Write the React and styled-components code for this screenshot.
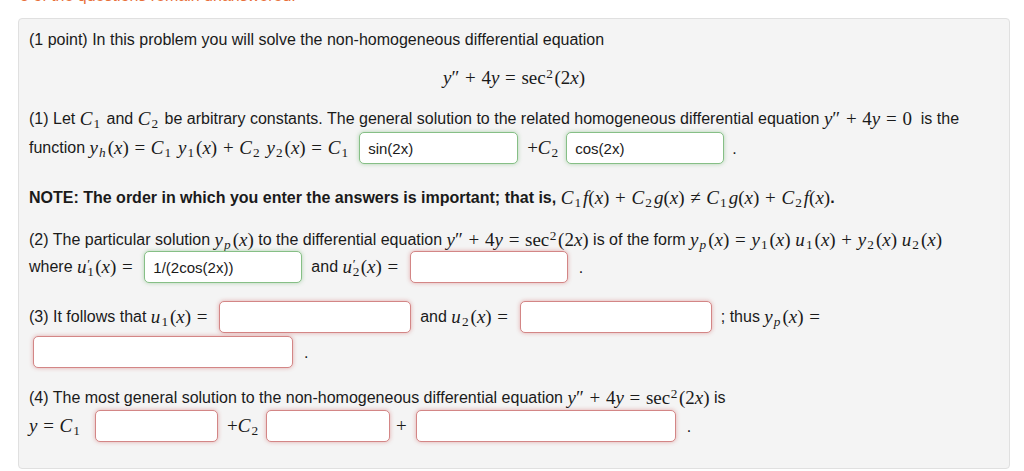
import React from "react";
import styled, { createGlobalStyle } from "styled-components";

const GlobalStyle = createGlobalStyle`
  html, body {
    margin: 0;
    padding: 0;
    background: #ffffff;
    overflow: hidden;
  }
  body {
    font-family: "Liberation Sans", Arial, sans-serif;
    font-size: 16px;
    color: #1a1a1a;
  }
`;

function App() {
  return (
    <Page>
      <GlobalStyle />
      <Notice>5 of the questions remain unanswered.</Notice>
      <Panel>
        <TextRow>
          (1 point) In this problem you will solve the non-homogeneous
          differential equation
        </TextRow>
        <DisplayRow $top={18}>
          <Math>
            <V>y</V>″<Op>+</Op>4<V>y</V>
            <Op>=</Op>sec<Sup>2</Sup>(2<V>x</V>)
          </Math>
        </DisplayRow>

        <TextRow $top={21}>
          (1) Let&nbsp;
          <Math>
            <V>C</V>
            <Sub>1</Sub>
          </Math>
          &nbsp;and&nbsp;
          <Math>
            <V>C</V>
            <Sub>2</Sub>
          </Math>
          &nbsp;be arbitrary constants. The general solution to the related
          homogeneous differential equation&nbsp;
          <Math>
            <V>y</V>″<Op>+</Op>4<V>y</V>
            <Op>=</Op>0
          </Math>
          &nbsp; is the
        </TextRow>
        <InputRow $top={3}>
          function&nbsp;
          <Math>
            <V>y</V>
            <Sub>
              <V>h</V>
            </Sub>
            (<V>x</V>)<Op>=</Op>
            <V>C</V>
            <Sub>1</Sub>&nbsp;<V>y</V>
            <Sub>1</Sub>(<V>x</V>)<Op>+</Op>
            <V>C</V>
            <Sub>2</Sub>&nbsp;<V>y</V>
            <Sub>2</Sub>(<V>x</V>)<Op>=</Op>
            <V>C</V>
            <Sub>1</Sub>
          </Math>
          <Answer $w={159} $state="ok" defaultValue="sin(2x)" readOnly />
          <Math>
            +<V>C</V>
            <Sub>2</Sub>
          </Math>
          <Answer $w={158} $state="ok" $tight defaultValue="cos(2x)" readOnly />
          <Dot>.</Dot>
        </InputRow>

        <NoteRow $top={24}>
          NOTE: The order in which you enter the answers is important; that
          is,&nbsp;
          <Math>
            <V>C</V>
            <Sub>1</Sub>
            <V>f</V>(<V>x</V>)<Op>+</Op>
            <V>C</V>
            <Sub>2</Sub>
            <V>g</V>(<V>x</V>)<Op>≠</Op>
            <V>C</V>
            <Sub>1</Sub>
            <V>g</V>(<V>x</V>)<Op>+</Op>
            <V>C</V>
            <Sub>2</Sub>
            <V>f</V>(<V>x</V>)
          </Math>
          .
        </NoteRow>

        <TextRow $top={22}>
          (2) The particular solution&nbsp;
          <Math>
            <V>y</V>
            <Sub>
              <V>p</V>
            </Sub>
            (<V>x</V>)
          </Math>
          &nbsp;to the differential equation&nbsp;
          <Math>
            <V>y</V>″<Op>+</Op>4<V>y</V>
            <Op>=</Op>sec<Sup>2</Sup>(2<V>x</V>)
          </Math>
          &nbsp;is of the form&nbsp;
          <Math>
            <V>y</V>
            <Sub>
              <V>p</V>
            </Sub>
            (<V>x</V>)<Op>=</Op>
            <V>y</V>
            <Sub>1</Sub>(<V>x</V>)&nbsp;<V>u</V>
            <Sub>1</Sub>(<V>x</V>)<Op>+</Op>
            <V>y</V>
            <Sub>2</Sub>(<V>x</V>)&nbsp;<V>u</V>
            <Sub>2</Sub>(<V>x</V>)
          </Math>
        </TextRow>
        <InputRow $top={1}>
          where&nbsp;
          <Math>
            <V>u</V>
            <Scripts>
              <ScriptLine>′</ScriptLine>
              <ScriptLine>1</ScriptLine>
            </Scripts>
            (<V>x</V>)<Op>=</Op>
          </Math>
          <Answer $w={158} $state="ok" $near defaultValue="1/(2cos(2x))" readOnly />
          and&nbsp;
          <Math>
            <V>u</V>
            <Scripts>
              <ScriptLine>′</ScriptLine>
              <ScriptLine>2</ScriptLine>
            </Scripts>
            (<V>x</V>)<Op>=</Op>
          </Math>
          <Answer $w={158} $state="bad" $near readOnly />
          <Dot>.</Dot>
        </InputRow>

        <InputRow $top={18}>
          (3) It follows that&nbsp;
          <Math>
            <V>u</V>
            <Sub>1</Sub>(<V>x</V>)<Op>=</Op>
          </Math>
          <Answer $w={192} $state="bad" $near readOnly />
          and&nbsp;
          <Math>
            <V>u</V>
            <Sub>2</Sub>(<V>x</V>)<Op>=</Op>
          </Math>
          <Answer $w={192} $state="bad" $near readOnly />
          ; thus&nbsp;
          <Math>
            <V>y</V>
            <Sub>
              <V>p</V>
            </Sub>
            (<V>x</V>)<Op>=</Op>
          </Math>
        </InputRow>
        <InputRow $top={3}>
          <Answer $w={260} $state="bad" $first readOnly />
          <Dot>.</Dot>
        </InputRow>

        <TextRow $top={20}>
          (4) The most general solution to the non-homogeneous differential
          equation&nbsp;
          <Math>
            <V>y</V>″<Op>+</Op>4<V>y</V>
            <Op>=</Op>sec<Sup>2</Sup>(2<V>x</V>)
          </Math>
          &nbsp;is
        </TextRow>
        <InputRow $top={2}>
          <Math>
            <V>y</V>
            <Op>=</Op>
            <V>C</V>
            <Sub>1</Sub>
          </Math>
          <Answer $w={123} $state="bad" $wide readOnly />
          <Math>
            +<V>C</V>
            <Sub>2</Sub>
          </Math>
          <Answer $w={124} $state="bad" $tight readOnly />
          <Math>+</Math>
          <Answer $w={260} $state="bad" readOnly />
          <Dot>.</Dot>
        </InputRow>
      </Panel>
    </Page>
  );
}

export default App;

// Styles

const Page = styled.div`
  width: 1024px;
  height: 471px;
  box-sizing: border-box;
  padding: 0 14px 0 18px;
  overflow: hidden;
`;

const Notice = styled.div`
  margin-top: -12px;
  height: 16px;
  line-height: 16px;
  font-size: 16px;
  color: #e8703a;
  padding-left: 2px;
`;

const Panel = styled.div`
  margin-top: 14px;
  box-sizing: border-box;
  width: 992px;
  height: 451px;
  background: #f4f4f4;
  border: 1px solid #e0e0e0;
  border-radius: 4px;
  padding: 11px 10px 0 10px;
`;

const TextRow = styled.div`
  margin-top: ${p => p.$top || 0}px;
  height: 20px;
  line-height: 20px;
  white-space: nowrap;
  display: flex;
  align-items: center;
`;

const NoteRow = styled(TextRow)`
  font-weight: 700;

  & > span {
    font-weight: 400;
  }
`;

const DisplayRow = styled(TextRow)`
  justify-content: center;
`;

const InputRow = styled.div`
  margin-top: ${p => p.$top || 0}px;
  height: 32px;
  white-space: nowrap;
  display: flex;
  align-items: center;
`;

const Math = styled.span`
  font-family: "Liberation Serif", "Times New Roman", serif;
  font-size: 19px;
  line-height: 20px;
  white-space: nowrap;
`;

const V = styled.i`
  font-style: italic;
`;

const Op = styled.span`
  margin: 0 0.3em;
`;

const Sub = styled.sub`
  font-size: 70%;
  line-height: 0;
  vertical-align: -0.2em;
  margin-left: 0.08em;
  margin-right: 0.15em;
`;

const Sup = styled.sup`
  font-size: 70%;
  line-height: 0;
  vertical-align: 0.45em;
  margin-left: 0.04em;
  margin-right: 0.12em;
`;

const Scripts = styled.span`
  display: inline-block;
  font-size: 70%;
  line-height: 8px;
  vertical-align: -3px;
  margin-left: 0.05em;
  margin-right: 0.1em;
`;

const ScriptLine = styled.span`
  display: block;
`;

const Dot = styled.span`
  margin-left: 2px;
  padding-top: 2px;
`;

const Answer = styled.input`
  box-sizing: border-box;
  width: ${p => p.$w}px;
  height: 32px;
  margin: 0 ${p => (p.$tight ? 6 : 9)}px 0
    ${p =>
      p.$first ? 4 : p.$tight ? 6 : p.$wide ? 13 : p.$near ? 6 : 9}px;
  padding: 0 8px;
  font-family: "Liberation Sans", Arial, sans-serif;
  font-size: 15px;
  color: #1a1a1a;
  background: #ffffff;
  border-radius: 5px;
  outline: none;
  border: 1px solid
    ${p => (p.$state === "ok" ? "#86bf86" : "#d38686")};
  box-shadow: 0 0 4px
    ${p =>
      p.$state === "ok" ? "rgba(90, 170, 90, 0.45)" : "rgba(205, 80, 80, 0.45)"};
`;
